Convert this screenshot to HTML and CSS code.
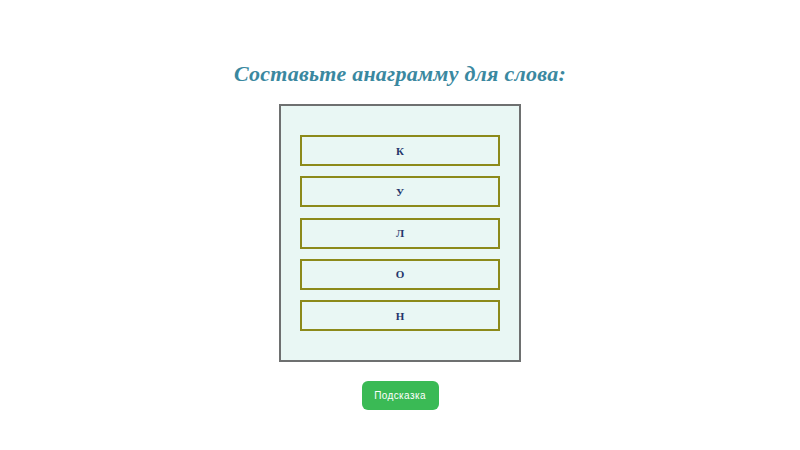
FILE: index.html
```html
<!DOCTYPE html>
<html lang="ru">
<head>
<meta charset="utf-8">
<title>Анаграмма</title>
<link rel="stylesheet" href="styles.css">
</head>
<body>
<main class="page">
  <h1 class="title">Составьте анаграмму для слова:</h1>
  <div class="board">
    <div class="tile">К</div>
    <div class="tile">У</div>
    <div class="tile">Л</div>
    <div class="tile">О</div>
    <div class="tile">Н</div>
  </div>
  <button class="hint">Подсказка</button>
</main>
</body>
</html>
```
FILE: styles.css
```css
html, body {
  margin: 0;
  padding: 0;
  background: #ffffff;
}
.page {
  display: flex;
  flex-direction: column;
  align-items: center;
  padding-top: 61px;
}
.title {
  margin: 0;
  font-family: "Liberation Serif", "DejaVu Serif", serif;
  font-style: italic;
  font-weight: bold;
  font-size: 22px;
  line-height: 26px;
  letter-spacing: 0.25px;
  color: #3a88a0;
}
.board {
  margin-top: 17px;
  width: 200px;
  padding: 29px 19px;
  border: 2px solid #6e7070;
  background: #e9f7f4;
  display: flex;
  flex-direction: column;
  gap: 10.25px;
}
.tile {
  height: 27px;
  border: 2px solid #8c8a1a;
  display: flex;
  align-items: center;
  justify-content: center;
  font-family: "Liberation Serif", "DejaVu Serif", serif;
  font-weight: bold;
  font-size: 11px;
  color: #24356a;
}
.hint {
  margin-top: 19px;
  width: 77px;
  height: 29px;
  border: none;
  border-radius: 6px;
  background: #3aba55;
  color: #ffffff;
  font-family: "Liberation Sans", Arial, sans-serif;
  font-size: 10px;
  letter-spacing: 0.4px;
  padding: 0;
}
```
